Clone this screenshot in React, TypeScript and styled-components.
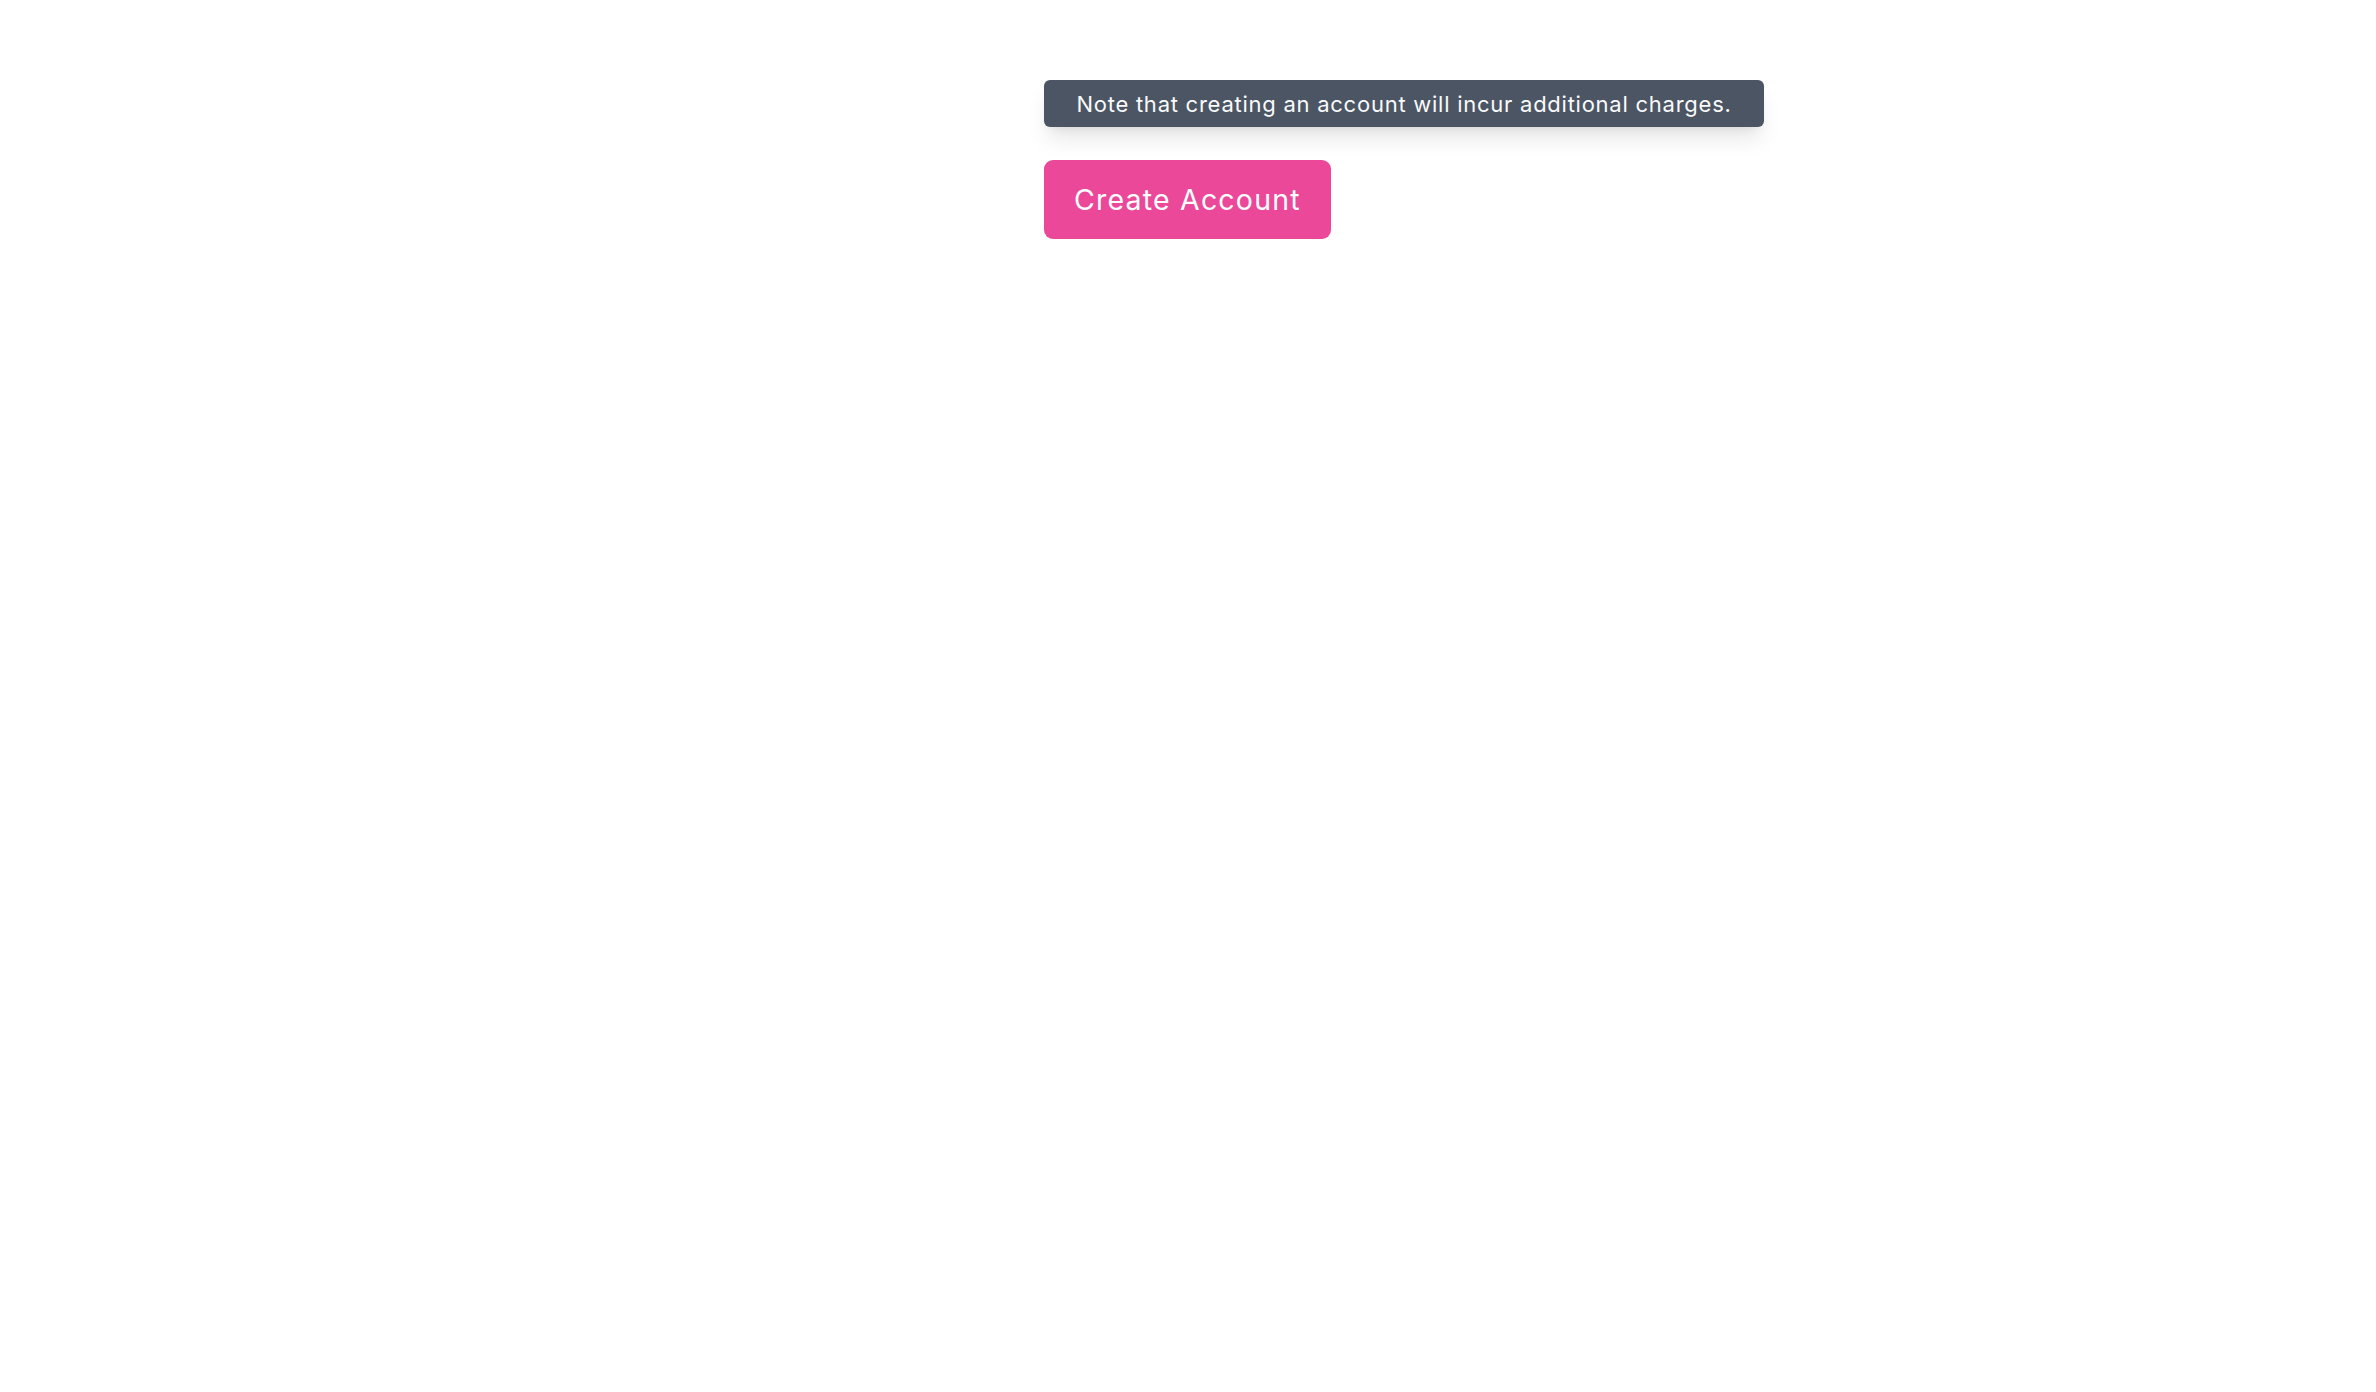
import React from 'react';
import styled, { createGlobalStyle } from 'styled-components';

const GlobalStyle = createGlobalStyle`
  html, body {
    margin: 0;
    padding: 0;
    background: #ffffff;
    font-family: Inter, "Noto Sans", "Liberation Sans", sans-serif;
  }
`;

const Page = styled.div`
  min-height: 1392px;
  padding: 160px 0 0 1044px;
  box-sizing: border-box;
`;

const Anchor = styled.div`
  position: relative;
  display: inline-block;
`;

const Tooltip = styled.div`
  position: absolute;
  left: 0;
  bottom: calc(100% + 33px);
  width: 720px;
  height: 47px;
  box-sizing: border-box;
  display: flex;
  align-items: center;
  justify-content: center;
  white-space: nowrap;
  background: #4b5563;
  color: #f9fafb;
  font-size: 22px;
  letter-spacing: 0.034em;
  border-radius: 6px;
  box-shadow: 0 15px 22px -4px rgba(0, 0, 0, 0.1), 0 6px 9px -6px rgba(0, 0, 0, 0.1);
`;

const Button = styled.button`
  display: block;
  height: 79px;
  padding: 0 30px;
  border: none;
  border-radius: 9px;
  background: #ec4899;
  color: #ffffff;
  font-family: inherit;
  font-size: 28.5px;
  letter-spacing: 0.042em;
  line-height: 42px;
  cursor: pointer;
`;

export default function App() {
  return (
    <>
      <GlobalStyle />
      <Page>
        <Anchor>
          <Tooltip role="tooltip">Note that creating an account will incur additional charges.</Tooltip>
          <Button>Create Account</Button>
        </Anchor>
      </Page>
    </>
  );
}
